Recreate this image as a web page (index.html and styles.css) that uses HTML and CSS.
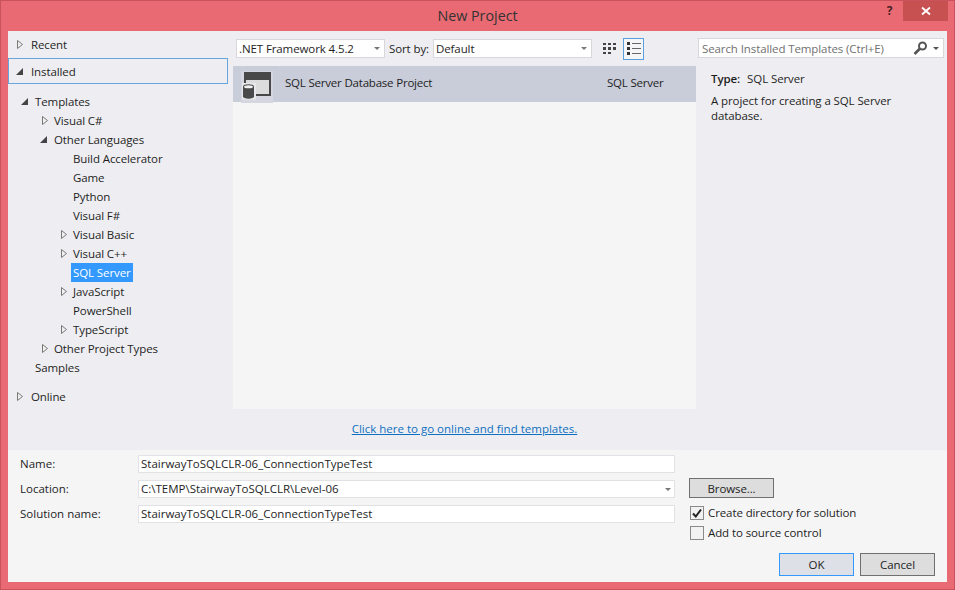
FILE: index.html
```html
<!DOCTYPE html>
<html lang="en">
<head>
<meta charset="utf-8">
<title>New Project</title>
<link rel="stylesheet" href="styles.css">
</head>
<body>
<div class="window">
  <header class="titlebar">
    <div class="title">New Project</div>
    <div class="help">?</div>
    <div class="close"><svg width="10" height="10" viewBox="0 0 10 10"><path d="M1 1.500 9 8.500M9 1.500 1 8.500" stroke="#fff" stroke-width="1.800" fill="none"/></svg></div>
  </header>
  <div class="content">
    <div class="upper">
      <aside class="sidebar">
        <div class="head head-recent"><svg class="arrow arrow-closed" viewBox="0 0 6 9"><path d="M.5.500 5.500 4.500.5 8.500Z" fill="#f0f0f0" stroke="#777"/></svg>Recent</div>
        <div class="head head-installed"><svg class="arrow arrow-open" viewBox="0 0 7 7"><path d="M7 0V7H0Z" fill="#444"/></svg>Installed</div>
        <ul class="tree">
          <li class="lvl0"><svg class="arrow arrow-open" viewBox="0 0 7 7"><path d="M7 0V7H0Z" fill="#444"/></svg>Templates</li>
          <li class="lvl1"><svg class="arrow arrow-closed" viewBox="0 0 6 9"><path d="M.5.500 5.500 4.500.5 8.500Z" fill="#f0f0f0" stroke="#777"/></svg>Visual C#</li>
          <li class="lvl1"><svg class="arrow arrow-open" viewBox="0 0 7 7"><path d="M7 0V7H0Z" fill="#444"/></svg>Other Languages</li>
          <li class="lvl2">Build Accelerator</li>
          <li class="lvl2">Game</li>
          <li class="lvl2">Python</li>
          <li class="lvl2">Visual F#</li>
          <li class="lvl2"><svg class="arrow arrow-closed" viewBox="0 0 6 9"><path d="M.5.500 5.500 4.500.5 8.500Z" fill="#f0f0f0" stroke="#777"/></svg>Visual Basic</li>
          <li class="lvl2"><svg class="arrow arrow-closed" viewBox="0 0 6 9"><path d="M.5.500 5.500 4.500.5 8.500Z" fill="#f0f0f0" stroke="#777"/></svg>Visual C++</li>
          <li class="lvl2"><span class="selected">SQL Server</span></li>
          <li class="lvl2"><svg class="arrow arrow-closed" viewBox="0 0 6 9"><path d="M.5.500 5.500 4.500.5 8.500Z" fill="#f0f0f0" stroke="#777"/></svg>JavaScript</li>
          <li class="lvl2">PowerShell</li>
          <li class="lvl2"><svg class="arrow arrow-closed" viewBox="0 0 6 9"><path d="M.5.500 5.500 4.500.5 8.500Z" fill="#f0f0f0" stroke="#777"/></svg>TypeScript</li>
          <li class="lvl1"><svg class="arrow arrow-closed" viewBox="0 0 6 9"><path d="M.5.500 5.500 4.500.5 8.500Z" fill="#f0f0f0" stroke="#777"/></svg>Other Project Types</li>
          <li class="lvl0">Samples</li>
        </ul>
        <div class="head head-online"><svg class="arrow arrow-closed" viewBox="0 0 6 9"><path d="M.5.500 5.500 4.500.5 8.500Z" fill="#f0f0f0" stroke="#777"/></svg>Online</div>
      </aside>
      <main class="center">
        <div class="toolbar">
          <div class="combo combo-fw"><span>.NET Framework 4.5.2</span><i class="caret"></i></div>
          <span class="sort-label">Sort by:</span>
          <div class="combo combo-sort"><span>Default</span><i class="caret"></i></div>
          <button class="view-btn" aria-label="Small icons"><svg width="13" height="11" viewBox="0 0 13 11"><path fill="#444" d="M0 0h3v2H0zM5 0h3v2H5zM10 0h3v2h-3zM0 4h3v3H0zM5 4h3v3H5zM10 4h3v3h-3zM0 9h3v2H0zM5 9h3v2H5z"/></svg></button>
          <button class="view-btn view-on" aria-label="Details"><svg width="14" height="14" viewBox="0 0 14 14"><path fill="#333" d="M0 0h3v3H0zM0 5h3v3H0zM0 10h3v3H0z"/><path fill="#666" d="M5 1h9v1H5zM5 6h9v1H5zM5 11h9v1H5z"/></svg></button>
        </div>
        <div class="list">
          <div class="item">
            <svg class="item-icon" width="32" height="32" viewBox="0 0 32 32">
              <path fill="#d5d6df" d="M0 0h32v32H0z"/>
              <path fill="#dcdcdc" d="M3 7h27v16H3z"/>
              <path fill="#484848" d="M3 1h27v8H3zM3 9h2v4H3zM28 9h2v16H28zM14 23h16v2H14z"/>
              <path fill="#e8e8ec" d="M1 12h14v16.500H1z"/>
              <path fill="#4a4a4a" d="M2 15.500c0-1.400 2.500-2.200 5.500-2.200s5.500.8 5.500 2.200v10c0 1.400-2.500 2.200-5.500 2.200s-5.500-.8-5.500-2.200z"/>
              <ellipse cx="7.500" cy="15.800" rx="4.400" ry="1.500" fill="#f2f2f2"/>
            </svg>
            <span class="item-name">SQL Server Database Project</span>
            <span class="item-type">SQL Server</span>
          </div>
        </div>
      </main>
      <aside class="details">
        <div class="search">
          <span class="search-text">Search Installed Templates (Ctrl+E)</span>
          <svg width="15" height="14" viewBox="0 0 15 14"><circle cx="9.500" cy="5" r="3.500" fill="none" stroke="#555" stroke-width="2"/><path d="M7 7.500 1.500 13" stroke="#555" stroke-width="2.600" fill="none"/></svg>
          <i class="caret"></i>
        </div>
        <div class="type-line"><b>Type:</b><span>SQL Server</span></div>
        <p class="desc">A project for creating a SQL Server database.</p>
      </aside>
    </div>
    <div class="link-row"><a href="#">Click here to go online and find templates.</a></div>
    <section class="form">
      <div class="form-top">
        <div class="fields">
          <label>Name:</label>
          <div class="input">StairwayToSQLCLR-06_ConnectionTypeTest</div>
          <label>Location:</label>
          <div class="input input-combo"><span>C:\TEMP\StairwayToSQLCLR\Level-06</span><i class="caret"></i></div>
          <label>Solution name:</label>
          <div class="input">StairwayToSQLCLR-06_ConnectionTypeTest</div>
        </div>
        <div class="options">
          <button class="btn btn-browse">Browse...</button>
          <div class="check"><span class="box"><svg width="12" height="12" viewBox="0 0 12 12"><path d="M2 6.500 4.800 9.500 10 2.500" fill="none" stroke="#222" stroke-width="2"/></svg></span><span class="check-label">Create directory for solution</span></div>
          <div class="check"><span class="box"></span><span class="check-label">Add to source control</span></div>
        </div>
      </div>
      <div class="actions">
        <button class="btn btn-ok">OK</button>
        <button class="btn">Cancel</button>
      </div>
    </section>
  </div>
</div>
</body>
</html>
```
FILE: styles.css
```css
* { box-sizing: border-box; }
html, body { margin: 0; padding: 0; }
body {
  width: 955px;
  height: 590px;
  overflow: hidden;
  font-family: "Open Sans", "Noto Sans", sans-serif;
  font-size: 11.5px;
  letter-spacing: -0.1px;
  color: #1e1e1e;
}
.window {
  width: 955px;
  height: 590px;
  background: #e96a72;
  border: 1px solid #c9535c;
  display: flex;
  flex-direction: column;
}
.titlebar {
  height: 30px;
  display: flex;
  align-items: flex-start;
  flex: none;
  padding-right: 6px;
}
.title {
  flex: 1;
  padding: 5px 0 0 77px;
  text-align: center;
  font-size: 14.3px;
  letter-spacing: 0;
  line-height: 20px;
  color: #333;
}
.help {
  width: 24px;
  font-weight: 700;
  font-size: 12px;
  line-height: 20px;
  color: #4a2226;
  text-align: center;
  margin-right: 2px;
  padding-left: 1px;
}
.close {
  width: 45px;
  height: 20px;
  background: #c75050;
  display: flex;
  align-items: center;
  justify-content: center;
}
.content {
  flex: 1;
  margin: 0 7px 7px;
  background: #eeeef2;
  display: flex;
  flex-direction: column;
}
.upper { display: flex; height: 378px; flex: none; }

/* Sidebar */
.sidebar { width: 224px; flex: none; padding-top: 4px; }
.head {
  display: flex;
  align-items: center;
  height: 19px;
  padding-left: 23px;
  position: relative;
}
.arrow { position: absolute; }
.arrow-closed { width: 6px; height: 9px; top: 5px; }
.arrow-open { width: 7px; height: 7px; top: 6px; }
.head-recent .arrow, .head-online .arrow { left: 9px; }
.head-installed {
  width: 220px;
  height: 26px;
  margin-top: 4px;
  border: 1px solid #68a5dc;
  padding-left: 22px;
}
.head-installed .arrow { left: 7px; top: 9px; }
.head-online { margin-top: 10px; }
.tree { list-style: none; margin: 8px 0 0; padding: 0; }
.tree li { height: 19px; line-height: 19px; position: relative; white-space: nowrap; }
.lvl0 { padding-left: 27px; }
.lvl1 { padding-left: 46px; }
.lvl2 { padding-left: 65px; }
.lvl0 .arrow { left: 13px; }
.lvl1 .arrow-open { left: 32px; }
.lvl1 .arrow-closed { left: 34px; }
.lvl2 .arrow-closed { left: 53px; }
.selected {
  display: inline-block;
  height: 19px;
  margin-left: -2px;
  padding: 0 2px;
  background: #3399ff;
  color: #fff;
}

/* Center */
.center { width: 465px; flex: none; padding-left: 1px; display: flex; flex-direction: column; }
.toolbar { display: flex; align-items: center; height: 35px; padding: 0 0 0 3px; flex: none; }
.combo {
  height: 19px;
  background: #fff;
  border: 1px solid #d8d8dc;
  display: flex;
  align-items: center;
  justify-content: space-between;
  padding: 0 4px 0 2px;
  margin-top: -1px;
}
.combo-fw { width: 149px; }
.combo-sort { width: 159px; }
.sort-label { width: 48px; padding-left: 4px; margin-top: -1px; }
.caret {
  display: block;
  width: 0;
  height: 0;
  border: 3px solid transparent;
  border-top-color: #777;
  border-bottom-width: 0;
  flex: none;
}
.view-btn {
  padding: 0;
  background: none;
  border: 1px solid transparent;
  width: 21px;
  height: 22px;
  display: flex;
  align-items: center;
  justify-content: center;
  margin-left: 7px;
}
.view-btn + .view-btn { margin-left: 3px; }
.view-on { border-color: #5ba0dc; background: #f5f5f8; }
.list { flex: 1; background: #f5f5f5; width: 463px; }
.item {
  height: 36px;
  background: #c9ccd9;
  display: flex;
  align-items: center;
  padding-left: 8px;
}
.item-icon { flex: none; align-self: flex-start; margin-top: 5px; }
.item-name { margin-left: 12px; width: 322px; letter-spacing: -0.2px; margin-top: -3px; }
.item-type { letter-spacing: -0.2px; margin-top: -3px; }

/* Details */
.details { flex: 1; padding: 7px 4px 0 1px; }
.search {
  height: 20px;
  width: 246px;
  background: #fff;
  border: 1px solid #d8d8dc;
  display: flex;
  align-items: center;
  padding: 0 4px 0 3px;
  color: #707070;
}
.search-text { flex: 1; }
.search .caret { margin-left: 5px; border-top-color: #555; }
.type-line { margin: 11px 0 0 13px; line-height: 19px; }
.type-line b { font-weight: 600; margin-right: 7px; }
.desc { margin: 5px 0 0 13px; width: 205px; line-height: 15px; }

/* Link */
.link-row { height: 41px; flex: none; display: flex; align-items: center; justify-content: center; padding: 0 26px 2px 0; }
.link-row a { color: #0e70c0; font-size: 11.5px; letter-spacing: 0; }

/* Form */
.form { flex: 1; background: #f5f5f6; padding: 5px 12px 0; display: flex; flex-direction: column; }
.form-top { display: flex; }
.fields {
  display: grid;
  grid-template-columns: 118px 537px;
  grid-auto-rows: 18px;
  row-gap: 7px;
  align-items: center;
}
.fields label { margin-top: -2px; letter-spacing: 0; }
.input {
  height: 18px;
  background: #fff;
  border: 1px solid #e2e2e6;
  padding: 0 3px 0 2px;
  line-height: 16px;
  letter-spacing: 0;
  white-space: nowrap;
}
.input-combo { display: flex; align-items: center; justify-content: space-between; }
.options { margin-left: 14px; padding-top: 23px; }
.btn {
  width: 75px;
  height: 23px;
  font: inherit;
  letter-spacing: inherit;
  color: inherit;
  background: #dddddd;
  border: 1px solid #707070;
  padding: 0;
}
.btn-browse { display: block; width: 85px; height: 20px; margin-bottom: 8px; }
.check { display: flex; align-items: center; height: 14px; margin: 0 0 6px 1px; }
.check-label { margin-top: -2px; }
.box {
  width: 14px;
  height: 14px;
  margin-right: 4px;
  background: #f2f2f2;
  border: 1px solid #8a8a8a;
  display: flex;
  align-items: center;
  justify-content: center;
}
.actions { display: flex; justify-content: flex-end; gap: 6px; margin-top: 7px; }
.btn-ok { border-color: #3399ff; background: #dde0e6; }
```
